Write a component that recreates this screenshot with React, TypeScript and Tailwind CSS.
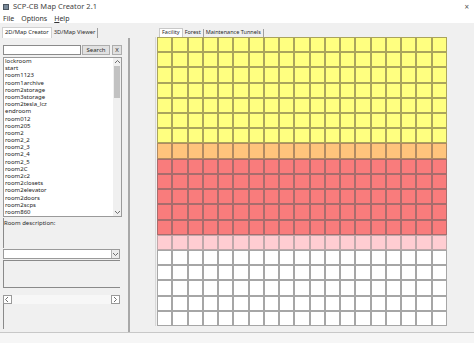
import React from 'react';

const rooms = [
  'lockroom', 'start', 'room1123', 'room1archive', 'room2storage', 'room3storage',
  'room2tesla_lcz', 'endroom', 'room012', 'room205', 'room2', 'room2_2', 'room2_3',
  'room2_4', 'room2_5', 'room2C', 'room2c2', 'room2closets', 'room2elevator',
  'room2doors', 'room2scps', 'room860',
];

type RowStyle = { fill: string; line: string };

const rowStyle = (r: number): RowStyle => {
  if (r < 7) return { fill: 'bg-[#ffff80]', line: 'border-[#aaa45c]' };
  if (r === 7) return { fill: 'bg-[#ffc47c]', line: 'border-[#b08a62]' };
  if (r < 13) return { fill: 'bg-[#f97c7c]', line: 'border-[#a86c6c]' };
  if (r === 13) return { fill: 'bg-[#ffcdd2]', line: 'border-[#bfa8aa]' };
  return { fill: 'bg-white', line: 'border-[#a6a6a6]' };
};

const MapGrid: React.FC = () => {
  const cells = [];
  for (let r = 0; r < 19; r++) {
    const s = rowStyle(r);
    for (let c = 0; c < 19; c++) {
      cells.push(<div key={`${r}-${c}`} className={`border ${s.fill} ${s.line}`} />);
    }
  }
  return (
    <div className="grid grid-cols-[repeat(19,minmax(0,1fr))] grid-rows-[repeat(19,minmax(0,1fr))] w-[290px] h-[289px]">
      {cells}
    </div>
  );
};

const Arrow: React.FC<{ dir: 'up' | 'down' | 'left' | 'right' }> = ({ dir }) => {
  const d = {
    up: 'M1 4 L3.5 1.5 L6 4',
    down: 'M1 2 L3.5 4.5 L6 2',
    left: 'M4 1 L1.5 3.5 L4 6',
    right: 'M2 1 L4.5 3.5 L2 6',
  }[dir];
  return (
    <svg width="7" height="7" viewBox="0 0 7 7">
      <path d={d} fill="none" stroke="#606060" strokeWidth="0.9" />
    </svg>
  );
};

const App: React.FC = () => {
  return (
    <div
      className="w-[474px] h-[343px] bg-white flex flex-col overflow-hidden text-[#2a2a2a]"
      style={{ fontFamily: '"Noto Sans", "Open Sans", sans-serif' }}
    >
      {/* title bar */}
      <div className="h-[13px] flex items-center pl-[3px] pr-[5px] shrink-0">
        <div className="w-[6px] h-[6px] bg-[#7a8a9a] border border-[#4a5560] mr-[4px]" />
        <span className="text-[7.5px] leading-none text-[#444]">SCP-CB Map Creator 2.1</span>
        <span className="ml-auto text-[8px] leading-none text-[#555]">×</span>
      </div>
      {/* menu bar */}
      <div className="h-[10px] flex items-center gap-[7px] pl-[3px] text-[7px] leading-none text-[#333] shrink-0">
        <span>File</span>
        <span>Options</span>
        <span><u>H</u>elp</span>
      </div>

      {/* client */}
      <div className="flex-1 bg-[#f0f0f0] flex min-h-0 border-b border-[#c8c8c8]">
        {/* left panel */}
        <div className="w-[130px] flex flex-col pt-[4px] pl-[2px] shrink-0">
          <div className="flex h-[11px] items-end text-[5.8px] leading-none">
            <div className="h-[11px] px-[2px] flex items-center bg-white border border-b-0 border-[#d0d0d0]">2D/Map Creator</div>
            <div className="h-[10px] px-[2px] flex items-center border-r border-[#a0a0a0]">3D/Map Viewer</div>
          </div>
          <div className="flex-1 flex flex-col border-r-2 border-[#a8a8a8] pl-[1px] pt-[7px] pb-[3px]">
            {/* search row */}
            <div className="flex h-[10px] items-stretch">
              <div className="w-[78px] bg-white border border-[#8a8a8a]" />
              <div className="w-[28px] ml-[1px] bg-[#e1e1e1] border border-[#adadad] text-[6px] leading-none flex items-center justify-center">Search</div>
              <div className="w-[10px] ml-[2px] bg-[#e1e1e1] border border-[#adadad] text-[6px] leading-none flex items-center justify-center">X</div>
            </div>
            {/* list box */}
            <div className="mt-[2px] w-[119px] h-[160px] bg-white border border-[#9a9a9a] flex">
              <div className="flex-1 flex flex-col pl-[1px] overflow-hidden">
                {rooms.map((r) => (
                  <div key={r} className="h-[7.2px] text-[6px] leading-[7.2px] text-[#222] whitespace-nowrap">{r}</div>
                ))}
              </div>
              <div className="w-[8px] bg-[#f0f0f0] flex flex-col items-center">
                <div className="h-[8px] flex items-center"><Arrow dir="up" /></div>
                <div className="w-[6px] h-[32px] bg-[#c2c2c2]" />
                <div className="flex-1" />
                <div className="h-[8px] flex items-center"><Arrow dir="down" /></div>
              </div>
            </div>
            {/* description */}
            <div className="w-[117px] h-[30px] border-l border-[#8a8a8a] mt-[1px] text-[6px] leading-none pt-[2px]">
              Room description:
            </div>
            <div className="w-[117px] h-[10px] bg-white border border-[#9a9a9a] mt-[1px] flex justify-end">
              <div className="w-[8px] bg-[#ececec] border-l border-[#b0b0b0] flex items-center justify-center"><Arrow dir="down" /></div>
            </div>
            <div className="w-[117px] h-[28px] border border-r-0 border-[#8a8a8a] mt-[1px]" />
            <div className="w-[117px] h-[9px] mt-[7px] flex bg-[#f7f7f7]">
              <div className="w-[9px] border border-[#9a9a9a] bg-white flex items-center justify-center"><Arrow dir="left" /></div>
              <div className="flex-1" />
              <div className="w-[9px] border border-[#9a9a9a] bg-white flex items-center justify-center"><Arrow dir="right" /></div>
            </div>
            <div className="w-[117px] flex-1 border-l border-[#8a8a8a]" />
          </div>
        </div>

        {/* right panel */}
        <div className="flex-1 flex flex-col pt-[5px] pl-[25px]">
          <div className="flex h-[9px] items-end text-[5.5px] leading-none pl-[4px]">
            <div className="h-[9px] px-[2px] flex items-center bg-white border border-b-0 border-[#c8c8c8]">Facility</div>
            <div className="h-[8px] px-[2px] flex items-center border-r border-[#a0a0a0]">Forest</div>
            <div className="h-[8px] px-[2px] flex items-center border-r border-[#a0a0a0]">Maintenance Tunnels</div>
          </div>
          <div className="flex">
            <div className="border-l border-[#d8d8d8] pl-[1px]">
              <MapGrid />
            </div>
          </div>
        </div>
      </div>
      <div className="h-[10px] bg-[#f6f6f6] shrink-0" />
    </div>
  );
};

export default App;
